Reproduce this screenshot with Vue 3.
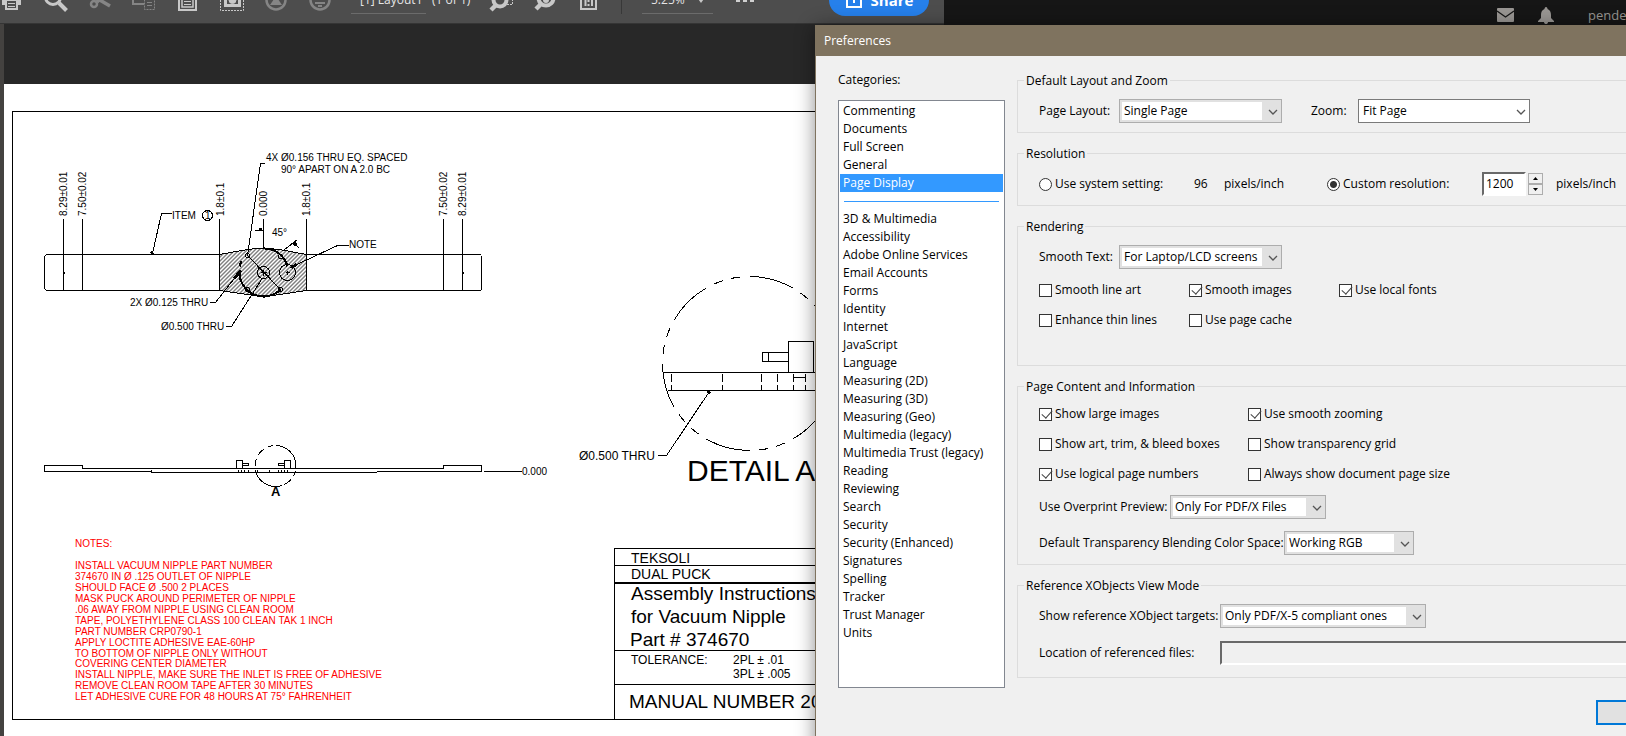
<script setup>
import { ref } from 'vue'

const generalCategories = ['Commenting', 'Documents', 'Full Screen', 'General', 'Page Display']
const featureCategories = [
  '3D & Multimedia', 'Accessibility', 'Adobe Online Services', 'Email Accounts', 'Forms',
  'Identity', 'Internet', 'JavaScript', 'Language', 'Measuring (2D)', 'Measuring (3D)',
  'Measuring (Geo)', 'Multimedia (legacy)', 'Multimedia Trust (legacy)', 'Reading',
  'Reviewing', 'Search', 'Security', 'Security (Enhanced)', 'Signatures', 'Spelling',
  'Tracker', 'Trust Manager', 'Units'
]
const selected = ref('Page Display')

const resolutionMode = ref('custom')
const resolution = ref('1200')

const renderingOptions = ref([
  { id: 'line-art', label: 'Smooth line art', on: false },
  { id: 'smooth-images', label: 'Smooth images', on: true },
  { id: 'local-fonts', label: 'Use local fonts', on: true },
  { id: 'thin-lines', label: 'Enhance thin lines', on: false },
  { id: 'page-cache', label: 'Use page cache', on: false }
])
const contentOptions = ref([
  { id: 'large-images', label: 'Show large images', on: true },
  { id: 'smooth-zoom', label: 'Use smooth zooming', on: true },
  { id: 'boxes', label: 'Show art, trim, & bleed boxes', on: false },
  { id: 'grid', label: 'Show transparency grid', on: false },
  { id: 'page-numbers', label: 'Use logical page numbers', on: true },
  { id: 'page-size', label: 'Always show document page size', on: false }
])

const notes = [
  [547, 'NOTES:'],
  [569, 'INSTALL VACUUM NIPPLE PART NUMBER'],
  [580, '374670 IN Ø .125 OUTLET OF NIPPLE'],
  [591, 'SHOULD FACE Ø .500 2 PLACES'],
  [602, 'MASK PUCK AROUND PERIMETER OF NIPPLE'],
  [613, '.06 AWAY FROM NIPPLE USING CLEAN ROOM'],
  [624, 'TAPE, POLYETHYLENE CLASS 100 CLEAN TAK 1 INCH'],
  [635, 'PART NUMBER CRP0790-1'],
  [646, 'APPLY LOCTITE ADHESIVE EAE-60HP'],
  [657, 'TO BOTTOM OF NIPPLE ONLY WITHOUT'],
  [667, 'COVERING CENTER DIAMETER'],
  [678, 'INSTALL NIPPLE, MAKE SURE THE INLET IS FREE OF ADHESIVE'],
  [689, 'REMOVE CLEAN ROOM TAPE AFTER 30 MINUTES'],
  [700, 'LET ADHESIVE CURE FOR 48 HOURS AT 75° FAHRENHEIT']
]

const ordinates = [
  { x: 67, text: '8.29±0.01' },
  { x: 86, text: '7.50±0.02' },
  { x: 224, text: '1.8±0.1' },
  { x: 267, text: '0.000' },
  { x: 310, text: '1.8±0.1' },
  { x: 447, text: '7.50±0.02' },
  { x: 466, text: '8.29±0.01' }
]
</script>

<template>
  <main class="desktop">
    <header class="site-bar">
      <svg class="mail" width="17" height="14" viewBox="0 0 17 14" aria-hidden="true">
        <rect width="17" height="14" rx="1" fill="#999693" />
        <path d="M0 3 L8.500 9 L17 3" fill="none" stroke="#161616" stroke-width="1.300" />
      </svg>
      <svg class="bell" width="16" height="17" viewBox="0 0 16 17" aria-hidden="true">
        <path d="M8 0 C9 0 9.500 1 9.500 2 C12 3 13 5 13 8 V11 L16 14 V15 H0 V14 L3 11 V8 C3 5 4 3 6.500 2 C6.500 1 7 0 8 0 Z M6 15 H10 C10 16.500 9 17 8 17 S6 16.500 6 15" fill="#999693" />
      </svg>
      <span class="user">pende</span>
    </header>

    <section class="reader">
      <div class="toolbar">
        <button class="tool" aria-label="Print">
          <svg width="24" height="24" viewBox="0 0 24 24"><path d="M2 5 H21 V17 H18 V22 H5 V17 H2 Z" fill="#c8c8c8" /><path d="M7 13 H16 V20 H7 Z" fill="#4d4d4d" /><path d="M8 15.500 H15 M8 18.500 H15" stroke="#c8c8c8" stroke-width="1" /></svg>
        </button>
        <button class="tool" aria-label="Find">
          <svg width="24" height="24" viewBox="0 0 24 24"><circle cx="9" cy="9" r="7.500" fill="none" stroke="#c8c8c8" stroke-width="3" /><path d="M15 15 L22.500 22.500" stroke="#c8c8c8" stroke-width="4" /></svg>
        </button>
        <button class="tool" aria-label="Cut">
          <svg width="24" height="24" viewBox="0 0 24 24"><circle cx="6" cy="16" r="3" fill="none" stroke="#858585" stroke-width="2.500" /><path d="M9 14 L20 2 M10 11 L22 18" stroke="#858585" stroke-width="3.500" /></svg>
        </button>
        <button class="tool" aria-label="Copy">
          <svg width="24" height="24" viewBox="0 0 24 24" fill="none" stroke="#858585"><path d="M12 16 H1 V2 H16 V9" stroke-width="2" /><rect x="12.500" y="10.500" width="10" height="11" stroke-dasharray="2 1" /><path d="M15 14.500 H20 M15 17.500 H20" /></svg>
        </button>
        <button class="tool" aria-label="Single page">
          <svg width="24" height="24" viewBox="0 0 24 24" fill="none" stroke="#c8c8c8"><rect x="3" y="1" width="17" height="21" stroke-width="2" /><rect x="6" y="4" width="11" height="15" stroke-width="1.500" /><path d="M8 13.500 H15 M8 16.500 H15" /></svg>
        </button>
        <button class="tool" aria-label="Snapshot">
          <svg width="24" height="24" viewBox="0 0 24 24" fill="none" stroke="#c8c8c8"><path d="M.500 0 V22.500 H23.500 V0" stroke-dasharray="2 1" /><path d="M5.500 0 V17.500 H19.500 V0" stroke-width="3" /><circle cx="12.500" cy="12" r="3.500" fill="#c8c8c8" /><path d="M13 11 H15" stroke="#4d4d4d" /></svg>
        </button>
        <button class="tool" aria-label="Previous page">
          <svg width="24" height="24" viewBox="0 0 24 24"><circle cx="12" cy="12" r="9.500" fill="none" stroke="#858585" stroke-width="2.500" /><path d="M6 17 L12 8 L18 17 Z" fill="#858585" /></svg>
        </button>
        <button class="tool" aria-label="Next page">
          <svg width="24" height="24" viewBox="0 0 24 24"><circle cx="12" cy="12" r="9.500" fill="none" stroke="#858585" stroke-width="2.500" /><path d="M7 15 H17 M10 18 H14" stroke="#858585" stroke-width="2" /></svg>
        </button>
        <input class="bar-field page-field" value="[1] Layout1" aria-label="Page label">
        <span class="page-count">(1 of 1)</span>
        <button class="tool" aria-label="Marquee zoom">
          <svg width="24" height="24" viewBox="0 0 24 24"><circle cx="11" cy="12" r="6.500" fill="none" stroke="#c8c8c8" stroke-width="4" /><path d="M2 22 L7 17" stroke="#c8c8c8" stroke-width="4.500" /><path d="M18 16.500 H23.500 V5" stroke="#c8c8c8" stroke-dasharray="2 1" fill="none" /></svg>
        </button>
        <button class="tool" aria-label="Dynamic zoom">
          <svg width="24" height="24" viewBox="0 0 24 24"><circle cx="13" cy="10" r="7.500" fill="none" stroke="#c8c8c8" stroke-width="4" /><circle cx="13" cy="12" r="3" fill="#c8c8c8" /><path d="M3 21 L8 16" stroke="#c8c8c8" stroke-width="4.500" /></svg>
        </button>
        <button class="tool" aria-label="Actual size">
          <svg width="24" height="24" viewBox="0 0 24 24" fill="none" stroke="#c8c8c8" stroke-width="2"><rect x="4" y="1" width="15" height="20" /><path d="M8.500 10 V18 M15 10 V18 M11.500 12 V14 M11.500 16 V18" /></svg>
        </button>
        <span class="divider"></span>
        <input class="bar-field zoom-field" value="5.25%" aria-label="Zoom level">
        <svg class="zoom-arrow" width="10" height="8" viewBox="0 0 10 8" aria-hidden="true"><path d="M0 0 H10 L5 7 Z" fill="#c8c8c8" /></svg>
        <button class="tool more" aria-label="More tools">
          <svg width="20" height="6" viewBox="0 0 20 6"><path d="M1 1 H5 V5 H1 Z M8 1 H12 V5 H8 Z M15 1 H19 V5 H15 Z" fill="#d0d0d0" /></svg>
        </button>
        <button class="share">
          <svg width="18" height="18" viewBox="0 0 18 18" fill="none" stroke="#fff" stroke-width="2" aria-hidden="true"><path d="M5 5 H2 V16 H16 V5 H13 M9 12 V1 M6 4 L9 1 L12 4" /></svg>
          <span>Share</span>
        </button>
      </div>

      <div class="canvas">
        <article class="sheet">
          <svg class="drawing" width="812" height="652" viewBox="4 84 812 652" role="img" aria-label="Dual puck assembly drawing">
            <defs>
              <pattern id="hatch" width="4" height="4" patternUnits="userSpaceOnUse">
                <path d="M-1 5 L5 -1 M-1 1 L1 -1 M3 5 L5 3" stroke="#000" stroke-width="1" />
              </pattern>
            </defs>

            <g class="ink" transform="translate(.5 .5)">
              <path d="M816 111 H12 V719 H816" />

              <!-- top view -->
              <path d="M219 254 H46 L44 256 V288 L46 290 H219 M306 254 H480 M481 255 V289 M480 290 H306" />
              <path d="M63 218 V290 M82 218 V290 M219 218 V290 M306 218 V290 M443 218 V290 M462 218 V290 M263 218 V248" />
              <path d="M63 272 h1 M462 272 h1" stroke-width="2" />
              <path d="M219 254 L247 249 Q263 247 279 249 L306 254 V290 L279 294 Q263 297 247 294 L219 290 Z" fill="url(#hatch)" />
              <path d="M263 248 A24 24 0 0 1 287 266 M280 289 A24 24 0 0 1 239 272 M239 266 A24 24 0 0 1 241 261" stroke-width="2" />
              <circle cx="263" cy="272" r="6" />
              <circle cx="287" cy="272" r="8" />
              <circle cx="247" cy="255" r="2" />
              <circle cx="280" cy="256" r="2" />
              <circle cx="280" cy="289" r="2" />
              <circle cx="247" cy="289" r="2" />
              <path d="M247 255 L280 289 M260 272 H266 M263 269 V275 M285 272 H289 M287 270 V274" />
              <path d="M171 213 H161 L152 253 M264 163 H260 L247 255 M209 302 H215 L240 270 M225 326 H231 L261 279 M348 245 H337 L290 267" />
              <path d="M254 230 H262 M284 249 L297 239 M293 242 L299 248" />
              <path d="M234 278 L240 270 M151 251 L152 254 M258 229 h3 M293 242 l3 3 M291 267 l5 -3" stroke-width="3" />
              <circle cx="207" cy="215" r="5" />

              <!-- edge view -->
              <path d="M151 471 H44 V465 H82 V468 H443 V465 H481 V471 H376 M151 471 V472 H376 V471 M151 469 V471 M483 471 H521" />
              <path d="M236 468 V460 H242 V468 M242 463 H248 V465 H242 M290 468 V460 H284 V468 M284 463 H278 V465 H284" />
              <path d="M238 469 V472 M241 469 V472 M244 469 V472 M248 469 V472 M255 469 V472 M257 469 V472 M269 469 V472 M278 469 V472 M281 469 V472 M284 469 V472 M287 469 V472" />
              <path d="M275 445 A20 20 0 0 1 275 486 A20 20 0 0 1 275 445" pathLength="360" stroke-dasharray="95 8 15 14 22 8 95 12 22 12 22 12 15 8" />

              <!-- detail view -->
              <path d="M749 276 A87 87 0 0 1 749 450 A87 87 0 0 1 749 276" pathLength="360" stroke-dasharray="30 6 6 6 6 6" />
              <path d="M662 372 H816 M667 390 H816 M788 372 V341 H813 V372 M788 352 H762 V361 H788 M768 352 V361 M793 377 H805" />
              <path d="M671 373 V390 M722 373 V390 M761 373 V390 M777 373 V390 M793 373 V390 M805 373 V390" stroke-dasharray="8 3" />
              <path d="M657 455 H666 L709 391" />
              <path d="M707 393 l2 -2" stroke-width="3" />

              <!-- title block -->
              <path d="M614 719 V548 H816 M614 565 H816 M614 650 H816 M614 684 H816" />
              <path d="M614 582 H816" stroke-width="2" />
            </g>

            <g class="lettering">
              <text v-for="mark in ordinates" :key="mark.x" :transform="`translate(${mark.x} 216) rotate(-90)`">{{ mark.text }}</text>
              <text x="172" y="219">ITEM</text>
              <text x="205" y="219">1</text>
              <text x="266" y="161">4X Ø0.156 THRU EQ. SPACED</text>
              <text x="281" y="173">90° APART ON A 2.0 BC</text>
              <text x="272" y="236">45°</text>
              <text x="349" y="248">NOTE</text>
              <text x="130" y="306">2X Ø0.125 THRU</text>
              <text x="161" y="330">Ø0.500 THRU</text>
              <text x="522" y="475">0.000</text>
              <text class="mark" x="271" y="496">A</text>
              <text class="size-12" x="579" y="460">Ø0.500 THRU</text>
              <text class="size-30" x="687" y="481">DETAIL A</text>
              <text class="size-14" x="631" y="563">TEKSOLI</text>
              <text class="size-14" x="631" y="579">DUAL PUCK</text>
              <text class="size-19" x="631" y="600">Assembly Instructions</text>
              <text class="size-19" x="631" y="623">for Vacuum Nipple</text>
              <text class="size-19" x="630" y="646">Part # 374670</text>
              <text class="size-12" x="631" y="664">TOLERANCE:</text>
              <text class="size-12" x="733" y="664">2PL ± .01</text>
              <text class="size-12" x="733" y="678">3PL ± .005</text>
              <text class="size-19" x="629" y="708">MANUAL NUMBER 20</text>
            </g>
            <g class="lettering red">
              <text v-for="[y, line] in notes" :key="y" x="75" :y="y">{{ line }}</text>
            </g>
          </svg>
        </article>
      </div>
    </section>

    <section class="dialog" role="dialog" aria-labelledby="dialog-title">
      <h1 id="dialog-title" class="title-bar">Preferences</h1>
      <div class="dialog-body">
        <nav class="sidebar" aria-labelledby="cat-title">
          <h2 id="cat-title" class="list-title">Categories:</h2>
          <ul class="list">
            <li v-for="name in generalCategories" :key="name">
              <button class="entry" :class="{ current: selected === name }" @click="selected = name">{{ name }}</button>
            </li>
            <li class="rule" role="separator"></li>
            <li v-for="name in featureCategories" :key="name">
              <button class="entry" :class="{ current: selected === name }" @click="selected = name">{{ name }}</button>
            </li>
          </ul>
        </nav>

        <div class="panels">
          <fieldset>
            <legend>Default Layout and Zoom</legend>
            <div class="row">
              <label class="w-80" for="page-layout">Page Layout:</label>
              <span class="picker w-163">
                <select id="page-layout"><option>Single Page</option></select>
                <svg width="10" height="6" viewBox="0 0 10 6"><path d="M1 1 L5 5 L9 1" /></svg>
              </span>
              <label class="zoom-label" for="zoom">Zoom:</label>
              <span class="picker editable w-172">
                <select id="zoom"><option>Fit Page</option></select>
                <svg width="10" height="6" viewBox="0 0 10 6"><path d="M1 1 L5 5 L9 1" /></svg>
              </span>
            </div>
          </fieldset>

          <fieldset>
            <legend>Resolution</legend>
            <div class="row">
              <label class="choice w-155"><input v-model="resolutionMode" type="radio" name="resolution" value="system">Use system setting:</label>
              <span class="w-30">96</span>
              <span class="w-103">pixels/inch</span>
              <label class="choice w-155"><input v-model="resolutionMode" type="radio" name="resolution" value="custom">Custom resolution:</label>
              <input v-model="resolution" class="number" type="text" aria-label="Custom resolution value">
              <span class="spinner">
                <button aria-label="Increase"><svg width="5" height="3" viewBox="0 0 5 3"><path d="M0 3 L2.500 0 L5 3 Z" /></svg></button>
                <button aria-label="Decrease"><svg width="5" height="3" viewBox="0 0 5 3"><path d="M0 0 L2.500 3 L5 0 Z" /></svg></button>
              </span>
              <span>pixels/inch</span>
            </div>
          </fieldset>

          <fieldset class="rendering">
            <legend>Rendering</legend>
            <div class="row">
              <label class="w-80" for="smooth-text">Smooth Text:</label>
              <span class="picker w-163">
                <select id="smooth-text"><option>For Laptop/LCD screens</option></select>
                <svg width="10" height="6" viewBox="0 0 10 6"><path d="M1 1 L5 5 L9 1" /></svg>
              </span>
            </div>
            <div class="checks three">
              <label v-for="item in renderingOptions" :key="item.id" class="choice"><input v-model="item.on" type="checkbox">{{ item.label }}</label>
            </div>
          </fieldset>

          <fieldset class="content">
            <legend>Page Content and Information</legend>
            <div class="checks two">
              <label v-for="item in contentOptions" :key="item.id" class="choice"><input v-model="item.on" type="checkbox">{{ item.label }}</label>
            </div>
            <div class="row">
              <label class="w-131" for="overprint">Use Overprint Preview:</label>
              <span class="picker w-156">
                <select id="overprint"><option>Only For PDF/X Files</option></select>
                <svg width="10" height="6" viewBox="0 0 10 6"><path d="M1 1 L5 5 L9 1" /></svg>
              </span>
            </div>
            <div class="row spaced">
              <label class="w-245" for="blending">Default Transparency Blending Color Space:</label>
              <span class="picker w-130">
                <select id="blending"><option>Working RGB</option></select>
                <svg width="10" height="6" viewBox="0 0 10 6"><path d="M1 1 L5 5 L9 1" /></svg>
              </span>
            </div>
          </fieldset>

          <fieldset class="xobjects">
            <legend>Reference XObjects View Mode</legend>
            <div class="row">
              <label class="w-181" for="targets">Show reference XObject targets:</label>
              <span class="picker w-206">
                <select id="targets"><option>Only PDF/X-5 compliant ones</option></select>
                <svg width="10" height="6" viewBox="0 0 10 6"><path d="M1 1 L5 5 L9 1" /></svg>
              </span>
            </div>
            <div class="row spaced">
              <label class="w-181" for="location">Location of referenced files:</label>
              <input id="location" class="location" type="text" disabled>
            </div>
          </fieldset>
        </div>
      </div>
      <footer class="dialog-footer"><button class="ok" aria-label="OK"></button></footer>
    </section>
  </main>
</template>

<style>
body { margin: 0; background: #161616; }
</style>

<style scoped>
* { box-sizing: border-box; }
button, input, select { font: inherit; margin: 0; }
button { border: 0; padding: 0; background: none; }

.desktop {
  position: relative;
  height: 100vh;
  overflow: hidden;
  background: #161616;
  font: 12px/16px "Open Sans", "Noto Sans", sans-serif;
  color: #000;
}

.site-bar {
  display: flex;
  justify-content: flex-end;
  align-items: center;
  height: 30px;
  color: #999693;
}
.bell { margin-left: 24px; }
.user { width: 38px; margin-left: 34px; font-size: 13px; line-height: 24px; white-space: nowrap; }

.reader {
  position: absolute;
  inset: 0 auto 0 0;
  display: flex;
  flex-direction: column;
  width: 944px;
  background: #282828;
}
.toolbar {
  display: flex;
  flex: none;
  align-items: center;
  height: 48px;
  margin-top: -24px;
  padding-right: 15px;
  border-bottom: 1px solid #353535;
  background: #4d4d4d;
  color: #e6e6e6;
}
.tool { display: flex; flex: none; justify-content: center; width: 44px; }
.tool:first-child { margin-left: -10px; }
.bar-field {
  flex: none;
  height: 28px;
  padding: 0 0 0 9px;
  border: 0;
  border-bottom: 1px solid #6b6b6b;
  background: transparent;
  color: inherit;
}
.page-field { width: 75px; margin-left: 9px; }
.page-count { flex: none; width: 47px; margin-left: 6px; white-space: nowrap; }
.divider { width: 1px; height: 28px; margin-left: 10px; background: #383838; }
.zoom-field { width: 71px; margin-left: 20px; }
.zoom-arrow { flex: none; margin-left: -17px; }
.more { margin-left: 17px; }
.share {
  display: flex;
  align-items: center;
  justify-content: center;
  gap: 8px;
  width: 100px;
  height: 32px;
  margin-left: auto;
  border-radius: 16px;
  background: #2680eb;
  color: #fff;
  font-size: 15px;
  font-weight: 700;
}
.canvas { flex: 1; padding-top: 60px; border-left: 4px solid #444240; }
.sheet { height: 100%; background: #fff; }
.drawing { display: block; }
.ink { fill: none; stroke: #000; stroke-width: 1; shape-rendering: crispEdges; }
#hatch path { shape-rendering: crispEdges; }
.lettering { font: 10px "Liberation Sans", Arial, sans-serif; fill: #000; }
.red { fill: #f00; }
.mark { font-size: 13px; font-weight: 700; }
.size-12 { font-size: 12px; }
.size-14 { font-size: 14px; }
.size-19 { font-size: 19px; }
.size-30 { font-size: 30px; }

.dialog {
  position: absolute;
  inset: 25px -60px -20px 815px;
  display: flex;
  flex-direction: column;
  border: 1px solid #7f735f;
  background: #f0f0f0;
  box-shadow: 0 2px 18px rgba(0, 0, 0, .45);
}
.title-bar {
  margin: 0;
  padding: 0 8px;
  background: #7f735f;
  color: #fff;
  font-size: 12px;
  font-weight: 400;
  line-height: 30px;
}
.dialog-body { display: flex; gap: 12px; padding: 15px 32px 0 22px; }
.sidebar { display: flex; flex: none; flex-direction: column; width: 167px; }
.list-title { margin: 0 0 11px; font-size: 12px; font-weight: 400; line-height: 18px; }
.list {
  height: 588px;
  margin: 0;
  padding: 1px;
  border: 1px solid #828790;
  background: #fff;
  list-style: none;
}
.entry { display: block; width: 100%; padding-left: 3px; line-height: 18px; text-align: left; white-space: nowrap; }
.current { background: #3399ff; color: #fff; }
.rule { height: 18px; padding: 9px 4px 8px; }
.rule::before { content: ""; display: block; height: 1px; background: #3399ff; }

.panels { display: flex; flex: 1; flex-direction: column; gap: 11px; min-width: 0; }
fieldset { min-width: 0; margin: 0; padding: 10px 21px 9px; border: 1px solid #dcdcdc; }
legend { margin-left: -15px; padding: 2px 2px 0; }
.row { display: flex; align-items: center; height: 24px; white-space: nowrap; }
.rendering { padding-bottom: 30px; }
.content { padding-top: 4px; }
.spaced { margin-top: 12px; }
.xobjects { padding-bottom: 12px; }
.xobjects .spaced { margin-top: 13px; }
.checks { display: grid; grid-auto-rows: 30px; align-items: center; white-space: nowrap; }
.three { grid-template-columns: 150px 150px 1fr; margin-top: 6px; }
.two { grid-template-columns: 209px 1fr; margin-bottom: 6px; }

.w-30 { flex: none; width: 30px; }
.w-80 { flex: none; width: 80px; }
.w-103 { flex: none; width: 103px; }
.w-130 { flex: none; width: 130px; }
.w-131 { flex: none; width: 131px; }
.w-155 { flex: none; width: 155px; }
.w-156 { flex: none; width: 156px; }
.w-163 { flex: none; width: 163px; }
.w-172 { flex: none; width: 172px; }
.w-181 { flex: none; width: 181px; }
.w-206 { flex: none; width: 206px; }
.w-245 { flex: none; width: 245px; }
.zoom-label { width: 47px; margin-left: 29px; }

.picker { position: relative; }
.picker select {
  display: block;
  width: 100%;
  height: 24px;
  padding: 0 20px 0 4px;
  appearance: none;
  border: 1px solid #adadad;
  border-radius: 0;
  background: #e1e1e1 linear-gradient(#fff, #fff) 2px 2px / calc(100% - 21px) 18px no-repeat;
  color: #000;
}
.editable select { border-color: #7a7a7a; background: #fff; }
.picker svg { position: absolute; top: 10px; right: 4px; pointer-events: none; }
.picker path { fill: none; stroke: #555; stroke-width: 1.3; }

.choice { display: flex; align-items: center; gap: 3px; }
.choice input {
  flex: none;
  width: 13px;
  height: 13px;
  appearance: none;
  border: 1px solid #333;
  background: #fff;
}
.choice input[type="radio"] { border-radius: 50%; }
.choice input[type="radio"]:checked { background: radial-gradient(circle, #333 0 3px, #fff 4px); }
.choice input[type="checkbox"]:checked::after {
  content: "";
  display: block;
  width: 5px;
  height: 9px;
  margin: -1px 0 0 4px;
  border: solid #444;
  border-width: 0 1px 1px 0;
  transform: rotate(42deg);
}
.number {
  width: 44px;
  height: 24px;
  padding: 0 2px 2px;
  border: 2px solid;
  border-color: #696969 #fff #fff #696969;
  background: #fff;
}
.spinner { display: grid; width: 15px; height: 22px; margin: 0 13px 0 2px; }
.spinner button { display: flex; align-items: center; justify-content: center; border: 1px solid #adadad; background: #f0f0f0; }
.location {
  flex: 1;
  min-width: 0;
  height: 24px;
  border: 2px solid;
  border-color: #696969 #fff #fff #696969;
  background: #f0f0f0;
}
.dialog-footer { display: flex; justify-content: flex-end; padding: 12px 14px 0; }
.ok { width: 75px; height: 25px; border: 2px solid #0078d7; background: #e1e1e1; }
</style>
